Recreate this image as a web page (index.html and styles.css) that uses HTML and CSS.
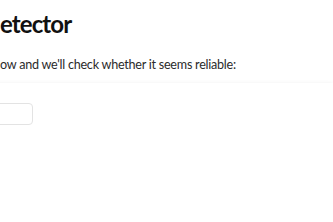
FILE: index.html
```html
<!DOCTYPE html>
<html lang="en">
<head>
<meta charset="utf-8">
<title>Detector</title>
<link rel="stylesheet" href="styles.css">
</head>
<body>
<main class="page">
  <h1 class="title">etector</h1>
  <p class="lead">ow and we'll check whether it seems reliable:</p>
  <section class="card">
    <input class="field" type="text" aria-label="URL">
  </section>
</main>
</body>
</html>
```
FILE: styles.css
```css
html, body {
  margin: 0;
  background: #ffffff;
}
body {
  font-family: "Lato", "Open Sans", sans-serif;
  color: #1b1b1b;
}
.page {
  display: flex;
  flex-direction: column;
}
.title {
  margin: 8px 0 0 0;
  font-size: 24px;
  line-height: 32px;
  font-weight: 700;
  letter-spacing: -0.9px;
  color: #111;
}
.lead {
  margin: 15px 0 0 0;
  font-size: 12.6px;
  line-height: 20px;
  letter-spacing: -0.25px;
  color: #2b2b2b;
}
.card {
  margin: 8px 0 0 -40px;
  height: 110px;
  box-sizing: border-box;
  padding: 20px;
  background: #fff;
  box-shadow: 0 1px 5px rgba(0, 0, 0, 0.09);
}
.field {
  display: block;
  box-sizing: border-box;
  width: 53px;
  height: 22px;
  margin: 0;
  border: 1px solid #e3e3e3;
  border-radius: 4px;
  background: #fff;
  outline: none;
}
```
